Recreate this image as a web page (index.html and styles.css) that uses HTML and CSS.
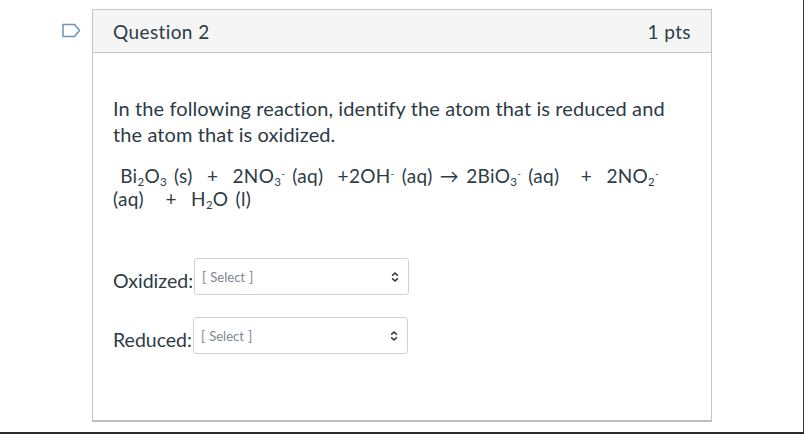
FILE: index.html
```html
<!DOCTYPE html>
<html lang="en">
<head>
<meta charset="utf-8">
<title>Question 2</title>
<link rel="stylesheet" href="styles.css">
</head>
<body>
<div class="frame">
  <div class="row">
    <div class="flag">
      <svg width="19" height="15" viewBox="0 0 19 15"><path d="M1 1.5 H12.5 L17.5 7.5 L12.5 13.5 H1 Z" fill="none" stroke="#6a94bb" stroke-width="1.5" stroke-linejoin="round"/></svg>
    </div>
    <div class="card">
      <div class="card-head">
        <span class="q-title">Question 2</span>
        <span class="q-pts">1 pts</span>
      </div>
      <div class="card-body">
        <p class="prompt">In the following reaction, identify the atom that is reduced and the atom that is oxidized.</p>
        <p class="eq">&nbsp;Bi<sub>2</sub>O<sub>3</sub> (s) &nbsp;+ &nbsp;2NO<sub>3</sub><sup>-</sup> (aq) &nbsp;+2OH<sup>-</sup> (aq) &rarr; 2BiO<sub>3</sub><sup>-</sup> (aq) &nbsp; + &nbsp;2NO<sub>2</sub><sup>-</sup><br>(aq) &nbsp; + &nbsp;H<sub>2</sub>O (l)</p>
        <div class="answer first">
          <span class="label">Oxidized:</span>
          <div class="select">
            <span class="ph">[ Select ]</span>
            <svg width="12" height="12" viewBox="0 0 12 12"><path d="M3.2 4.6 L6 2 L8.8 4.6 M3.2 7.4 L6 10 L8.8 7.4" fill="none" stroke="#2d3b45" stroke-width="1.6"/></svg>
          </div>
        </div>
        <div class="answer">
          <span class="label">Reduced:</span>
          <div class="select">
            <span class="ph">[ Select ]</span>
            <svg width="12" height="12" viewBox="0 0 12 12"><path d="M3.2 4.6 L6 2 L8.8 4.6 M3.2 7.4 L6 10 L8.8 7.4" fill="none" stroke="#2d3b45" stroke-width="1.6"/></svg>
          </div>
        </div>
      </div>
    </div>
  </div>
</div>
</body>
</html>
```
FILE: styles.css
```css
* { box-sizing: border-box; }
html, body { margin: 0; padding: 0; background: #fff; }
body { font-family: Lato, "Open Sans", sans-serif; color: #2d3b45; }

.frame {
  width: 804px;
  height: 434px;
  border-right: 1px solid #3a3a3a;
  border-bottom: 2px solid #2a2a2a;
  padding-top: 9px;
  overflow: hidden;
}

.row { display: flex; align-items: flex-start; }

.flag { width: 92px; padding-left: 62px; padding-top: 14px; }
.flag svg { display: block; }

.card {
  width: 620px;
  height: 413px;
  border: 1px solid #c4c4c4;
  border-bottom: 2px solid #bdbdbd;
  display: flex;
  flex-direction: column;
}

.card-head {
  height: 43px;
  background: #f5f5f5;
  border-bottom: 1px solid #c4c4c4;
  display: flex;
  align-items: center;
  justify-content: space-between;
  padding: 0 20px;
  font-size: 19px;
  letter-spacing: 0.4px;
}

.card-body { padding: 42px 20px 0 20px; }

.prompt {
  margin: 0;
  font-size: 20px;
  line-height: 26px;
  letter-spacing: 0.1px;
}

.eq {
  margin: 17px 0 0 0;
  font-size: 19px;
  line-height: 23px;
  letter-spacing: 0.3px;
  word-spacing: 2px;
}
.eq sub, .eq sup { line-height: 0; }
.eq sub { font-size: 11.5px; vertical-align: -2.5px; }
.eq sup { font-size: 10px; vertical-align: 6px; }

.answer { display: flex; align-items: flex-end; margin-top: 22px; }
.answer.first { margin-top: 48px; }

.label {
  font-size: 19.5px;
  line-height: 24px;
  padding-bottom: 2px;
}

.select {
  width: 215px;
  height: 37px;
  margin-left: 1px;
  border: 1px solid #cfd3d6;
  border-radius: 3px;
  background: #fff;
  display: flex;
  align-items: center;
  justify-content: space-between;
  padding: 0 7px 0 7px;
}
.ph { font-size: 13px; color: #7b868f; word-spacing: 1px; }
.select svg { display: block; }
```
